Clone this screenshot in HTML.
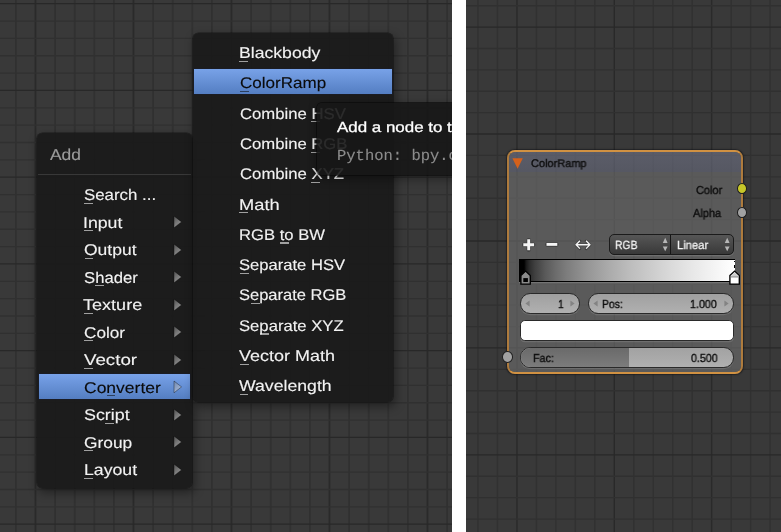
<!DOCTYPE html>
<html lang="en"><head><meta charset="utf-8"><title>Blender node editor - Add ColorRamp</title>
<style>
html,body{margin:0;padding:0}
body{width:781px;height:532px;background:#fff;overflow:hidden;position:relative;font-family:"Liberation Sans",sans-serif}
.panel{position:absolute;top:0;height:532px;overflow:hidden;background:#393939}
.grid{position:absolute;left:0;top:0}
.t{will-change:transform;position:absolute;line-height:1;white-space:pre;transform-origin:0 0;text-rendering:geometricPrecision}
.s{font-family:"Liberation Sans",sans-serif}
.m{font-family:"Liberation Mono",monospace}
.u{position:absolute;width:8.8px;height:1.25px;display:block}
.ab{position:absolute;display:block}
.menu{position:absolute;background:rgba(25,25,25,.9);border-radius:5.5px;box-shadow:0 0 0 .6px rgba(10,10,10,.55),2px 4px 10px 1px rgba(0,0,0,.38)}
.sep{position:absolute;height:1.2px;background:#383838}
.hl{position:absolute;background:linear-gradient(#78a2e8,#547ec2);box-shadow:0 0 0 .5px rgba(20,30,60,.5)}
.tip{position:absolute;background:rgba(23,23,23,.91);border-radius:5px;box-shadow:0 0 0 .9px rgba(6,6,6,.6),1px 3px 9px 2px rgba(0,0,0,.3)}
.node{position:absolute;box-sizing:border-box;border-style:solid;border-width:2.1px 2.5px 2.2px 2.5px;border-color:#d09142 #ae7b3d #d09142 #ae7b3d;border-radius:8px;overflow:hidden;box-shadow:0 0 1.2px .6px rgba(14,16,22,.55)}
.nh{height:19.8px;background:linear-gradient(rgba(110,113,131,.64),rgba(102,105,122,.64))}
.nb{height:210px;background:rgba(110,110,110,.64)}
.sock{position:absolute;width:10.8px;height:11.4px;border-radius:50%;box-sizing:border-box;border:1.3px solid #1e1e1e}
.dd{position:absolute;box-sizing:border-box;border:1px solid #1b1b1b;border-radius:5px;background:linear-gradient(#565656,#393939);box-shadow:0 1.3px 0 rgba(255,255,255,.13)}
.ddv{position:absolute;top:0;bottom:0;width:1.3px;background:#161616}
.band{position:absolute;box-sizing:border-box;border-style:solid;border-color:#000;border-width:1.4px 0 1.5px 1.3px;background:linear-gradient(90deg,#000000 0%,#191919 1%,#2c2c2c 2.5%,#3f3f3f 5%,#595959 10%,#6c6c6c 15%,#7c7c7c 20%,#959595 30%,#aaaaaa 40%,#bcbcbc 50%,#cbcbcb 60%,#dadada 70%,#e7e7e7 80%,#f3f3f3 90%,#ffffff 100%);box-shadow:0 1.3px 0 rgba(255,255,255,.16)}
.num{position:absolute;box-sizing:border-box;border:1px solid #2a2a2a;border-radius:10.2px;background:linear-gradient(#a0a0a0,#b0b0b0);box-shadow:0 1.3px 0 rgba(255,255,255,.12)}
.sw{position:absolute;box-sizing:border-box;border:1px solid #2a2a2a;border-radius:4.8px;background:#fff;box-shadow:0 1.3px 0 rgba(255,255,255,.12)}
.sl{position:absolute;box-sizing:border-box;border:1px solid #2a2a2a;border-radius:10.2px;background:linear-gradient(#a2a2a2,#b0b0b0);overflow:hidden;box-shadow:0 1.3px 0 rgba(255,255,255,.12)}
.slf{position:absolute;left:0;top:0;bottom:0;background:linear-gradient(#6a6a6a,#7c7c7c)}
</style></head>
<body>
<svg width="0" height="0" style="position:absolute"><defs><linearGradient id="ga" x1="0" y1="0" x2="0.6" y2="1"><stop offset="0" stop-color="#505050"/><stop offset="1" stop-color="#969696"/></linearGradient><linearGradient id="gb" x1="0" y1="0" x2="0.6" y2="1"><stop offset="0" stop-color="#6f87b0"/><stop offset="1" stop-color="#a9bad6"/></linearGradient></defs></svg>
<div class="panel" style="left:0;width:452px">
<svg class="grid" width="452" height="532" viewBox="0 0 452 532"><path d="M15.90 0V532M55.10 0V532M74.70 0V532M94.30 0V532M113.90 0V532M153.10 0V532M172.70 0V532M192.30 0V532M211.90 0V532M251.10 0V532M270.70 0V532M290.30 0V532M309.90 0V532M349.10 0V532M368.70 0V532M388.30 0V532M407.90 0V532M447.10 0V532" stroke="#313131" stroke-width="1.7" fill="none"/><path d="M35.50 0V532M133.50 0V532M231.50 0V532M329.50 0V532M427.50 0V532" stroke="#2a2a2a" stroke-width="1.7" fill="none"/><path d="M0 21.05H452M0 38.40H452M0 55.75H452M0 73.10H452M0 107.80H452M0 125.15H452M0 142.50H452M0 159.85H452M0 194.55H452M0 211.90H452M0 229.25H452M0 246.60H452M0 281.30H452M0 298.65H452M0 316.00H452M0 333.35H452M0 368.05H452M0 385.40H452M0 402.75H452M0 420.10H452M0 454.80H452M0 472.15H452M0 489.50H452M0 506.85H452" stroke="#303030" stroke-width="1.3" fill="none"/><path d="M0 3.70H452M0 90.45H452M0 177.20H452M0 263.95H452M0 350.70H452M0 437.45H452M0 524.20H452" stroke="#282828" stroke-width="1.3" fill="none"/></svg>
<div class="menu" style="left:36.7px;top:133px;width:154.9px;height:354.6px"></div>
<div class="sep" style="left:38px;top:174.1px;width:152.5px"></div>
<div class="hl" style="left:38.8px;top:373.6px;width:151.2px;height:25px"></div>
<div class="menu" style="left:193.4px;top:32.5px;width:199.2px;height:369.9px"></div>
<div class="hl" style="left:193.9px;top:69.2px;width:197.8px;height:24.7px"></div>
<span class="t s" style="left:49.70px;top:148.20px;font-size:15.75px;color:#9c9c9c;-webkit-text-stroke:0.12px #9c9c9c;transform:scale(1.1066,1.0)">Add</span>
<span class="t s" style="left:83.93px;top:188.12px;font-size:15.56px;color:#f2f2f2;-webkit-text-stroke:0.12px #f2f2f2;transform:scale(1.0845,1.0)">Search ...</span><i class="u" style="left:84.33px;top:202.65px;background:#f2f2f2;opacity:0.62"></i>
<span class="t s" style="left:83.44px;top:215.60px;font-size:15.52px;color:#f2f2f2;-webkit-text-stroke:0.12px #f2f2f2;transform:scale(1.1408,1.0)">Input</span><i class="u" style="left:83.84px;top:230.15px;background:#f2f2f2;opacity:0.62"></i>
<span class="t s" style="left:84.15px;top:243.10px;font-size:15.52px;color:#f2f2f2;-webkit-text-stroke:0.12px #f2f2f2;transform:scale(1.1283,1.0)">Output</span><i class="u" style="left:84.55px;top:257.65px;background:#f2f2f2;opacity:0.62"></i>
<span class="t s" style="left:83.73px;top:270.63px;font-size:15.6px;color:#f2f2f2;-webkit-text-stroke:0.12px #f2f2f2;transform:scale(1.0704,1.0)">Shader</span><i class="u" style="left:95.25px;top:285.15px;background:#f2f2f2;opacity:0.62"></i>
<span class="t s" style="left:83.43px;top:298.10px;font-size:15.52px;color:#f2f2f2;-webkit-text-stroke:0.12px #f2f2f2;transform:scale(1.1631,1.0)">Texture</span><i class="u" style="left:83.83px;top:312.65px;background:#f2f2f2;opacity:0.62"></i>
<span class="t s" style="left:83.90px;top:325.60px;font-size:15.5px;color:#f2f2f2;-webkit-text-stroke:0.12px #f2f2f2;transform:scale(1.1074,1.0)">Color</span><i class="u" style="left:84.30px;top:340.15px;background:#f2f2f2;opacity:0.62"></i>
<span class="t s" style="left:83.54px;top:353.10px;font-size:15.52px;color:#f2f2f2;-webkit-text-stroke:0.12px #f2f2f2;transform:scale(1.2068,1.0)">Vector</span><i class="u" style="left:83.94px;top:367.65px;background:#f2f2f2;opacity:0.62"></i>
<span class="t s" style="left:83.89px;top:380.60px;font-size:15.52px;color:#0a0a0a;-webkit-text-stroke:0.12px #0a0a0a;transform:scale(1.1281,1.0)">Converter</span><i class="u" style="left:106.66px;top:395.15px;background:#0a0a0a;opacity:0.55"></i>
<span class="t s" style="left:83.63px;top:408.10px;font-size:15.52px;color:#f2f2f2;-webkit-text-stroke:0.12px #f2f2f2;transform:scale(1.15,1.0)">Script</span><i class="u" style="left:104.84px;top:422.65px;background:#f2f2f2;opacity:0.62"></i>
<span class="t s" style="left:83.88px;top:435.60px;font-size:15.5px;color:#f2f2f2;-webkit-text-stroke:0.12px #f2f2f2;transform:scale(1.1183,1.0)">Group</span><i class="u" style="left:84.28px;top:450.15px;background:#f2f2f2;opacity:0.62"></i>
<span class="t s" style="left:83.77px;top:463.10px;font-size:15.52px;color:#f2f2f2;-webkit-text-stroke:0.12px #f2f2f2;transform:scale(1.1404,1.0)">Layout</span><i class="u" style="left:84.17px;top:477.65px;background:#f2f2f2;opacity:0.62"></i>
<span class="t s" style="left:239.07px;top:46.10px;font-size:15.47px;color:#f2f2f2;-webkit-text-stroke:0.12px #f2f2f2;transform:scale(1.14,1.0)">Blackbody</span><i class="u" style="left:239.47px;top:60.65px;background:#f2f2f2;opacity:0.62"></i>
<span class="t s" style="left:239.51px;top:76.39px;font-size:15.49px;color:#0a0a0a;-webkit-text-stroke:0.12px #0a0a0a;transform:scale(1.101,1.0)">ColorRamp</span><i class="u" style="left:239.91px;top:90.94px;background:#0a0a0a;opacity:0.55"></i>
<span class="t s" style="left:239.51px;top:106.71px;font-size:15.47px;color:#f2f2f2;-webkit-text-stroke:0.12px #f2f2f2;transform:scale(1.0794,1.0)">Combine HSV</span><i class="u" style="left:311.36px;top:121.23px;background:#f2f2f2;opacity:0.62"></i>
<span class="t s" style="left:239.51px;top:137.00px;font-size:15.46px;color:#f2f2f2;-webkit-text-stroke:0.12px #f2f2f2;transform:scale(1.0781,1.0)">Combine RGB</span><i class="u" style="left:311.20px;top:151.52px;background:#f2f2f2;opacity:0.62"></i>
<span class="t s" style="left:239.52px;top:167.28px;font-size:15.48px;color:#f2f2f2;-webkit-text-stroke:0.12px #f2f2f2;transform:scale(1.081,1.0)">Combine XYZ</span><i class="u" style="left:311.47px;top:181.81px;background:#f2f2f2;opacity:0.62"></i>
<span class="t s" style="left:239.03px;top:197.55px;font-size:15.49px;color:#f2f2f2;-webkit-text-stroke:0.12px #f2f2f2;transform:scale(1.1807,1.0)">Math</span><i class="u" style="left:239.43px;top:212.10px;background:#f2f2f2;opacity:0.62"></i>
<span class="t s" style="left:239.13px;top:227.88px;font-size:15.46px;color:#f2f2f2;-webkit-text-stroke:0.12px #f2f2f2;transform:scale(1.0763,1.0)">RGB to BW</span><i class="u" style="left:280.17px;top:242.39px;background:#f2f2f2;opacity:0.62"></i>
<span class="t s" style="left:239.34px;top:258.16px;font-size:15.46px;color:#f2f2f2;-webkit-text-stroke:0.12px #f2f2f2;transform:scale(1.0739,1.0)">Separate HSV</span><i class="u" style="left:239.74px;top:272.68px;background:#f2f2f2;opacity:0.62"></i>
<span class="t s" style="left:239.34px;top:288.43px;font-size:15.49px;color:#f2f2f2;-webkit-text-stroke:0.12px #f2f2f2;transform:scale(1.0658,1.0)">Separate RGB</span><i class="u" style="left:250.73px;top:302.97px;background:#f2f2f2;opacity:0.62"></i>
<span class="t s" style="left:239.34px;top:318.75px;font-size:15.46px;color:#f2f2f2;-webkit-text-stroke:0.12px #f2f2f2;transform:scale(1.0775,1.0)">Separate XYZ</span><i class="u" style="left:260.09px;top:333.26px;background:#f2f2f2;opacity:0.62"></i>
<span class="t s" style="left:239.34px;top:349.00px;font-size:15.49px;color:#f2f2f2;-webkit-text-stroke:0.12px #f2f2f2;transform:scale(1.1606,1.0)">Vector Math</span><i class="u" style="left:239.74px;top:363.55px;background:#f2f2f2;opacity:0.62"></i>
<span class="t s" style="left:239.26px;top:379.29px;font-size:15.47px;color:#f2f2f2;-webkit-text-stroke:0.12px #f2f2f2;transform:scale(1.1417,1.0)">Wavelength</span><i class="u" style="left:239.66px;top:393.84px;background:#f2f2f2;opacity:0.62"></i>
<svg class="ab" style="left:172.60px;top:215.40px" width="11" height="14" viewBox="0 0 11 14"><polygon points="1,1 8.5,6.9 1,12.8" fill="url(#ga)" stroke="rgba(0,0,0,.45)" stroke-width="0.8"/></svg>
<svg class="ab" style="left:172.60px;top:242.90px" width="11" height="14" viewBox="0 0 11 14"><polygon points="1,1 8.5,6.9 1,12.8" fill="url(#ga)" stroke="rgba(0,0,0,.45)" stroke-width="0.8"/></svg>
<svg class="ab" style="left:172.60px;top:270.40px" width="11" height="14" viewBox="0 0 11 14"><polygon points="1,1 8.5,6.9 1,12.8" fill="url(#ga)" stroke="rgba(0,0,0,.45)" stroke-width="0.8"/></svg>
<svg class="ab" style="left:172.60px;top:297.90px" width="11" height="14" viewBox="0 0 11 14"><polygon points="1,1 8.5,6.9 1,12.8" fill="url(#ga)" stroke="rgba(0,0,0,.45)" stroke-width="0.8"/></svg>
<svg class="ab" style="left:172.60px;top:325.40px" width="11" height="14" viewBox="0 0 11 14"><polygon points="1,1 8.5,6.9 1,12.8" fill="url(#ga)" stroke="rgba(0,0,0,.45)" stroke-width="0.8"/></svg>
<svg class="ab" style="left:172.60px;top:352.90px" width="11" height="14" viewBox="0 0 11 14"><polygon points="1,1 8.5,6.9 1,12.8" fill="url(#ga)" stroke="rgba(0,0,0,.45)" stroke-width="0.8"/></svg>
<svg class="ab" style="left:172.60px;top:380.40px" width="11" height="14" viewBox="0 0 11 14"><polygon points="1,1 8.5,6.9 1,12.8" fill="url(#gb)" stroke="rgba(0,0,0,.45)" stroke-width="0.8"/></svg>
<svg class="ab" style="left:172.60px;top:407.90px" width="11" height="14" viewBox="0 0 11 14"><polygon points="1,1 8.5,6.9 1,12.8" fill="url(#ga)" stroke="rgba(0,0,0,.45)" stroke-width="0.8"/></svg>
<svg class="ab" style="left:172.60px;top:435.40px" width="11" height="14" viewBox="0 0 11 14"><polygon points="1,1 8.5,6.9 1,12.8" fill="url(#ga)" stroke="rgba(0,0,0,.45)" stroke-width="0.8"/></svg>
<svg class="ab" style="left:172.60px;top:462.90px" width="11" height="14" viewBox="0 0 11 14"><polygon points="1,1 8.5,6.9 1,12.8" fill="url(#ga)" stroke="rgba(0,0,0,.45)" stroke-width="0.8"/></svg>
<div class="tip" style="left:317.3px;top:102.6px;width:200px;height:72.5px"></div>
<span class="t s" style="left:337.28px;top:121.18px;font-size:14.58px;color:#ffffff;-webkit-text-stroke:0.3px #ffffff;transform:scale(1.1612,1.0)">Add a node to the tree</span>
<span class="t m" style="left:336.90px;top:149.30px;font-size:15.36px;color:#8c8c8c;-webkit-text-stroke:0.12px #8c8c8c;transform:scale(1.0092,1.0)">Python: bpy.ops.node.add_node</span>
</div>
<div class="panel" style="left:466px;width:315px">
<svg class="grid" width="315" height="532" viewBox="0 0 315 532"><path d="M12.00 0V532M31.47 0V532M70.41 0V532M89.88 0V532M109.35 0V532M128.82 0V532M167.76 0V532M187.23 0V532M206.70 0V532M226.17 0V532M265.11 0V532M284.58 0V532M304.05 0V532" stroke="#313131" stroke-width="1.4" fill="none"/><path d="M50.94 0V532M148.29 0V532M245.64 0V532" stroke="#2a2a2a" stroke-width="1.4" fill="none"/><path d="M0 5.70H315M0 48.48H315M0 69.87H315M0 91.26H315M0 112.65H315M0 155.43H315M0 176.82H315M0 198.21H315M0 219.60H315M0 262.38H315M0 283.77H315M0 305.16H315M0 326.55H315M0 369.33H315M0 390.72H315M0 412.11H315M0 433.50H315M0 476.28H315M0 497.67H315M0 519.06H315" stroke="#303030" stroke-width="1.35" fill="none"/><path d="M0 27.09H315M0 134.04H315M0 240.99H315M0 347.94H315M0 454.89H315" stroke="#282828" stroke-width="1.35" fill="none"/></svg>
<div class="node" style="left:40.70px;top:150.1px;width:236.50px;height:223.70px"><div class="nh"></div><div class="nb"></div></div>
<svg class="ab" style="left:45px;top:157px" width="14" height="14" viewBox="0 0 14 14"><polygon points="1.4,1.3 11.8,1.3 6.6,11.8" fill="#d4611b"/></svg>
<div class="sock" style="left:270.50px;top:183.10px;background:#c7c729"></div>
<div class="sock" style="left:270.50px;top:207.00px;background:#a1a1a1"></div>
<div class="sock" style="left:36.20px;top:351.40px;background:#a1a1a1"></div>
<svg class="ab" style="left:54px;top:235px" width="76" height="20" viewBox="520 235 76 20"><g fill="none" stroke="rgba(0,0,0,.32)" stroke-width="4.4" stroke-linecap="round"><path d="M524.2 244.8H533.2M528.7 240.3V249.5"/><path d="M547.4 244.5H556.4"/></g><g fill="none" stroke="#f4f4f4" stroke-width="2.9" stroke-linecap="butt"><path d="M523.3 244.7H534.1M528.7 239.2V250.2"/><path d="M546.5 244.4H557.3"/></g><g fill="none" stroke="rgba(0,0,0,.28)" stroke-width="2.8" stroke-linejoin="round" stroke-linecap="round"><path d="M577 244.9H589M579.9 241L576.1 244.9L579.9 248.8M586.1 241L589.9 244.9L586.1 248.8"/></g><g fill="none" stroke="#f4f4f4" stroke-width="1.35" stroke-linejoin="miter"><path d="M577 244.7H589M579.9 240.8L576.1 244.7L579.9 248.6M586.1 240.8L589.9 244.7L586.1 248.6"/></g></svg>
<div class="dd" style="left:142.60000000000002px;top:234.3px;width:125.19999999999993px;height:20.5px"><div class="ddv" style="left:60.39999999999998px"></div></div>
<svg class="ab" style="left:195.79999999999995px;top:237px" width="8" height="15" viewBox="0 0 8 15"><polygon points="3.2,0.7 5.6,6 0.8,6" fill="#b8b8b8"/><polygon points="0.8,9.4 5.6,9.4 3.2,14.3" fill="#b8b8b8"/></svg>
<svg class="ab" style="left:258.29999999999995px;top:237px" width="8" height="15" viewBox="0 0 8 15"><polygon points="3.2,0.7 5.6,6 0.8,6" fill="#b8b8b8"/><polygon points="0.8,9.4 5.6,9.4 3.2,14.3" fill="#b8b8b8"/></svg>
<div class="band" style="left:52.80px;top:259.2px;width:216.20px;height:23px;background:linear-gradient(90deg,#000 0,#000 4.1px,#191919 6.2px,#2c2c2c 9.3px,#3f3f3f 14.6px,#595959 25.1px,#6c6c6c 35.6px,#7c7c7c 46.1px,#959595 67.0px,#aaaaaa 88.0px,#bcbcbc 109.0px,#cbcbcb 130.0px,#dadada 151.0px,#e7e7e7 171.9px,#f3f3f3 192.9px,#ffffff 213.9px)"></div>
<svg class="ab" style="left:53.90px;top:270px" width="12" height="16" viewBox="0 0 12 16"><path d="M0.9 5.5L5.6 1.1L10.3 5.5V14.05H0.9Z" fill="#8a8a8a" stroke="#000" stroke-width="1.35" stroke-linejoin="miter"/><rect x="3.3" y="8.1" width="4.6" height="3.9" fill="#000"/></svg>
<svg class="ab" style="left:262.60px;top:270px" width="12" height="16" viewBox="0 0 12 16"><path d="M0.9 5.5L5.6 1.1L10.3 5.5V14.05H0.9Z" fill="#fff" stroke="#000" stroke-width="1.35" stroke-linejoin="miter"/><path d="M1.9 5.7L5.6 2.2L9.3 5.7V6.4H1.9Z" fill="#cfcfcf"/><path d="M1.9 6.9H9.3" stroke="#8f8f8f" stroke-width="1.2" fill="none"/></svg>
<div class="ab" style="left:267.5px;top:260.6px;width:1.5px;height:9.4px;background:linear-gradient(#000 0 1.5px,#fff 1.5px 4px,#000 4px 6.6px,#fff 6.6px 9.4px)"></div>
<div class="num" style="left:53.50px;top:293px;width:60.20px;height:21px"></div>
<div class="num" style="left:122.10px;top:293px;width:145.60px;height:21px"></div>
<svg class="ab" style="left:58.60000000000002px;top:300.4px" width="5" height="7" viewBox="0 0 5 7"><polygon points="4.6,0.4 4.6,6.6 0.4,3.5" fill="#838383"/></svg>
<svg class="ab" style="left:104.39999999999998px;top:300.4px" width="5" height="7" viewBox="0 0 5 7"><polygon points="0.4,0.4 0.4,6.6 4.6,3.5" fill="#838383"/></svg>
<svg class="ab" style="left:127.20000000000005px;top:300.4px" width="5" height="7" viewBox="0 0 5 7"><polygon points="4.6,0.4 4.6,6.6 0.4,3.5" fill="#838383"/></svg>
<svg class="ab" style="left:257.79999999999995px;top:300.4px" width="5" height="7" viewBox="0 0 5 7"><polygon points="0.4,0.4 0.4,6.6 4.6,3.5" fill="#838383"/></svg>
<div class="sw" style="left:53.5px;top:320px;width:214.0px;height:21px"></div>
<div class="sl" style="left:53.5px;top:347px;width:214.0px;height:21px"><div class="slf" style="width:108.20000000000005px"></div></div>
<span class="t s" style="left:65.08px;top:159.28px;font-size:11.09px;color:#0e0e0e;-webkit-text-stroke:0.38px #0e0e0e;transform:scale(0.9904,1.0)">ColorRamp</span>
<span class="t s" style="left:230.05px;top:186.41px;font-size:11.55px;color:#0e0e0e;-webkit-text-stroke:0.38px #0e0e0e;transform:scale(0.9502,1.0)">Color</span>
<span class="t s" style="left:227.30px;top:209.21px;font-size:11.55px;color:#0e0e0e;-webkit-text-stroke:0.38px #0e0e0e;transform:scale(0.9532,1.0)">Alpha</span>
<span class="t s" style="left:149.36px;top:240.38px;font-size:11.93px;color:#f4f4f4;-webkit-text-stroke:0.25px #f4f4f4;transform:scale(0.8652,1.0)">RGB</span>
<span class="t s" style="left:210.99px;top:240.27px;font-size:11.68px;color:#f4f4f4;-webkit-text-stroke:0.25px #f4f4f4;transform:scale(0.9629,1.0)">Linear</span>
<span class="t s" style="left:91.61px;top:300.35px;font-size:11.57px;color:#111;-webkit-text-stroke:0.38px #111;transform:scale(0.8972,1.0)">1</span>
<span class="t s" style="left:136.16px;top:299.35px;font-size:11.67px;color:#111;-webkit-text-stroke:0.38px #111;transform:scale(0.8912,1.0)">Pos:</span>
<span class="t s" style="left:223.81px;top:300.31px;font-size:11.55px;color:#111;-webkit-text-stroke:0.38px #111;transform:scale(0.9261,1.0)">1.000</span>
<span class="t s" style="left:67.36px;top:354.41px;font-size:11.55px;color:#111;-webkit-text-stroke:0.38px #111;transform:scale(0.9297,1.0)">Fac:</span>
<span class="t s" style="left:225.43px;top:353.45px;font-size:11.67px;color:#111;-webkit-text-stroke:0.38px #111;transform:scale(0.9118,1.0)">0.500</span>
</div>
</body></html>
